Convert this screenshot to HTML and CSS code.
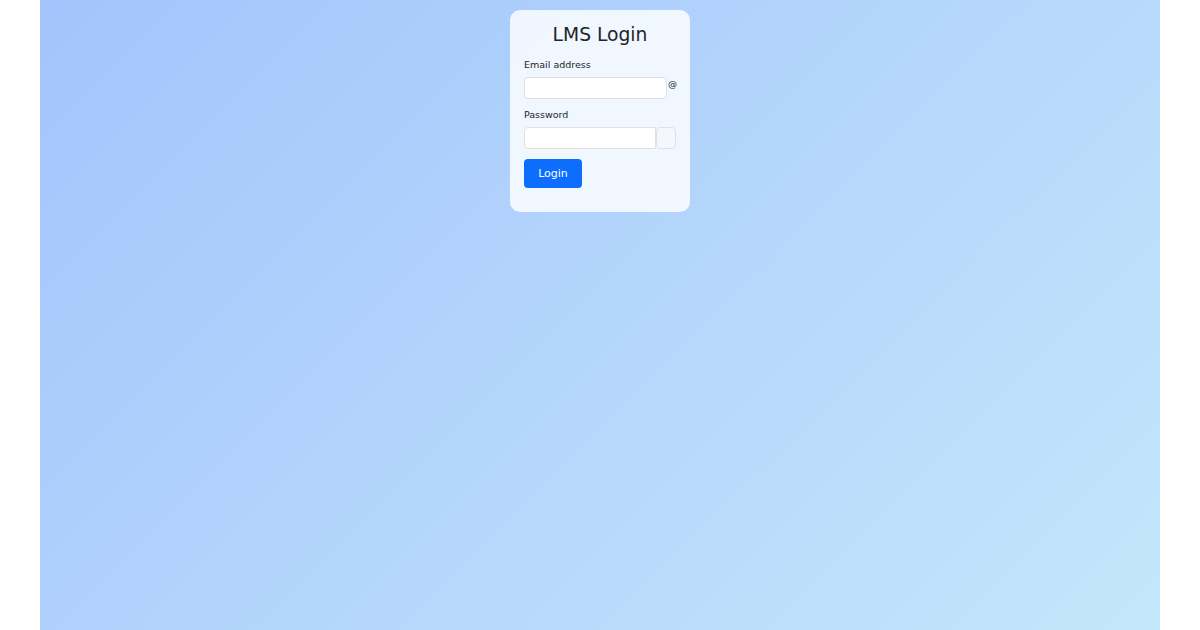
FILE: index.html
```html
<!DOCTYPE html>
<html>
<head>
<meta charset="utf-8">
<link rel="stylesheet" href="styles.css">
</head>
<body>
<div class="page">
  <div class="card">
    <h1 class="title">LMS Login</h1>
    <div class="field">
      <label class="label">Email address</label>
      <div class="group">
        <input class="input" type="text">
        <span class="addon-text">@</span>
      </div>
    </div>
    <div class="field">
      <label class="label">Password</label>
      <div class="group">
        <input class="input input-pw" type="password">
        <span class="addon-btn"></span>
      </div>
    </div>
    <button class="btn">Login</button>
  </div>
</div>
</body>
</html>
```

FILE: styles.css
```css
html, body {
  margin: 0;
  padding: 0;
  height: 100%;
  background: #ffffff;
}
body {
  font-family: "DejaVu Sans", sans-serif;
  color: #212529;
}
.page {
  width: 1120px;
  height: 630px;
  margin: 0 auto;
  background: linear-gradient(135deg, #a3c4fc 0%, #c3e7fb 100%);
  display: flex;
  justify-content: center;
  align-items: flex-start;
  padding-top: 10px;
  box-sizing: border-box;
}
.card {
  width: 180px;
  box-sizing: border-box;
  background: rgba(255, 255, 255, 0.82);
  border-radius: 10px;
  padding: 13px 14px 24px 14px;
  display: flex;
  flex-direction: column;
}
.title {
  margin: 0 0 12px 0;
  font-weight: 400;
  font-size: 18.7px;
  line-height: 24px;
  text-align: center;
  color: #212529;
}
.field {
  display: flex;
  flex-direction: column;
  margin-bottom: 10px;
}
.label {
  font-size: 9.5px;
  line-height: 12px;
  margin-bottom: 6px;
  color: #212529;
}
.group {
  display: flex;
  align-items: flex-start;
}
.input {
  width: 143px;
  height: 22px;
  box-sizing: border-box;
  border: 1px solid #dee2e6;
  border-radius: 4px;
  background: #ffffff;
  padding: 0 6px;
  margin: 0;
  outline: none;
}
.input-pw {
  width: 132px;
  border-top-right-radius: 0;
  border-bottom-right-radius: 0;
}
.addon-text {
  font-size: 9px;
  line-height: 14px;
  padding-left: 1px;
  color: #212529;
}
.addon-btn {
  width: 20px;
  height: 22px;
  box-sizing: border-box;
  border: 1px solid #dee2e6;
  border-radius: 4px;
  background: #f4f8fe;
}
.btn {
  align-self: flex-start;
  width: 58px;
  height: 29px;
  margin-top: 0;
  border: none;
  border-radius: 4px;
  background: #0d6efd;
  color: #ffffff;
  font-family: "DejaVu Sans", sans-serif;
  font-size: 11px;
  padding: 0;
}
```
